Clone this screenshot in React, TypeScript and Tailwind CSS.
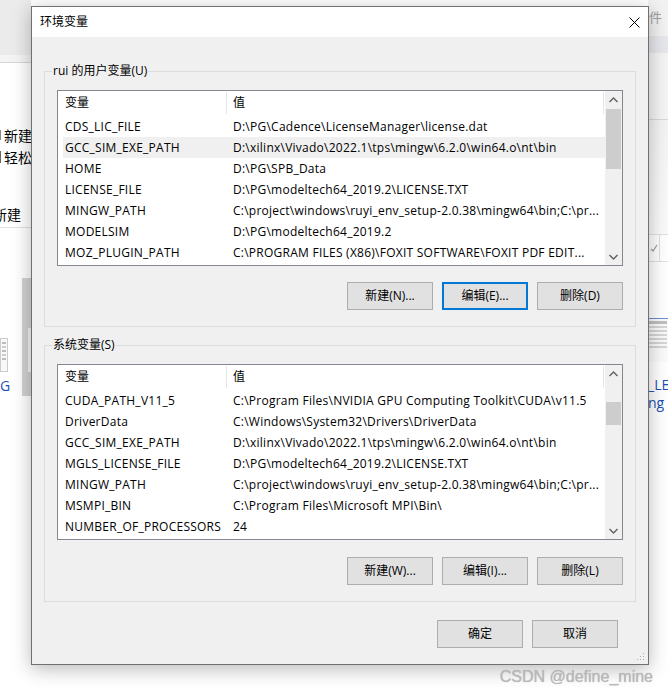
import type { ReactNode } from "react";

type Row = [string, string];

const userVars: Row[] = [
  ["CDS_LIC_FILE", "D:\\PG\\Cadence\\LicenseManager\\license.dat"],
  ["GCC_SIM_EXE_PATH", "D:\\xilinx\\Vivado\\2022.1\\tps\\mingw\\6.2.0\\win64.o\\nt\\bin"],
  ["HOME", "D:\\PG\\SPB_Data"],
  ["LICENSE_FILE", "D:\\PG\\modeltech64_2019.2\\LICENSE.TXT"],
  ["MINGW_PATH", "C:\\project\\windows\\ruyi_env_setup-2.0.38\\mingw64\\bin;C:\\pr..."],
  ["MODELSIM", "D:\\PG\\modeltech64_2019.2"],
  ["MOZ_PLUGIN_PATH", "C:\\PROGRAM FILES (X86)\\FOXIT SOFTWARE\\FOXIT PDF EDIT..."],
];

const systemVars: Row[] = [
  ["CUDA_PATH_V11_5", "C:\\Program Files\\NVIDIA GPU Computing Toolkit\\CUDA\\v11.5"],
  ["DriverData", "C:\\Windows\\System32\\Drivers\\DriverData"],
  ["GCC_SIM_EXE_PATH", "D:\\xilinx\\Vivado\\2022.1\\tps\\mingw\\6.2.0\\win64.o\\nt\\bin"],
  ["MGLS_LICENSE_FILE", "D:\\PG\\modeltech64_2019.2\\LICENSE.TXT"],
  ["MINGW_PATH", "C:\\project\\windows\\ruyi_env_setup-2.0.38\\mingw64\\bin;C:\\pr..."],
  ["MSMPI_BIN", "C:\\Program Files\\Microsoft MPI\\Bin\\"],
  ["NUMBER_OF_PROCESSORS", "24"],
];

function Chevron({ up }: { up?: boolean }) {
  return (
    <svg width="9" height="6" viewBox="0 0 9 6" className="text-[#606060]">
      <path
        d={up ? "M0.5 5 L4.5 1 L8.5 5" : "M0.5 1 L4.5 5 L8.5 1"}
        fill="none"
        stroke="currentColor"
        strokeWidth="1.4"
      />
    </svg>
  );
}

function VarList({
  rows,
  hovered,
  thumb,
}: {
  rows: Row[];
  hovered?: number;
  thumb: string;
}) {
  return (
    <div className="flex h-[176px] border border-[#828790] bg-white">
      <div className="flex min-w-0 flex-1 flex-col">
        <div className="flex h-[25px] shrink-0 pb-[2px]">
          <div className="mt-[1px] flex w-[169px] items-center border-r border-[#e5e5e5] pl-[7px]">
            变量
          </div>
          <div className="mr-[1px] mt-[1px] flex flex-1 items-center border-r border-[#e5e5e5] pl-[6px]">
            值
          </div>
        </div>
        {rows.map(([name, value], i) => (
          <div
            key={name}
            className={`ml-[5px] flex h-[21px] shrink-0 items-center tracking-[0.25px] ${
              i === hovered ? "bg-[#f0f0f0]" : ""
            }`}
          >
            <div className="w-[163px] shrink-0 overflow-hidden whitespace-nowrap pl-[2px]">{name}</div>
            <div className="min-w-0 flex-1 overflow-hidden whitespace-nowrap pl-[7px]">{value}</div>
          </div>
        ))}
      </div>
      <div className="flex w-[17px] shrink-0 flex-col bg-[#f0f0f0]">
        <div className="flex h-[17px] items-center justify-center">
          <Chevron up />
        </div>
        <div className="flex-1 px-[1px]">
          <div className={`bg-[#cdcdcd] ${thumb}`} />
        </div>
        <div className="flex h-[17px] items-center justify-center">
          <Chevron />
        </div>
      </div>
    </div>
  );
}

function Button({ children, focused }: { children: ReactNode; focused?: boolean }) {
  return (
    <div
      className={`flex h-[28px] w-[86px] items-center justify-center bg-[#e1e1e1] ${
        focused ? "border-2 border-[#0078d7]" : "border border-[#adadad]"
      }`}
    >
      {children}
    </div>
  );
}

function GroupBox({ label, children }: { label: string; children: ReactNode }) {
  return (
    <div className="relative mx-[12px] w-[592px] border border-[#dcdcdc] px-[12px] pb-[16px] pt-[18px]">
      <span className="absolute left-[7px] top-[-9px] bg-[#f0f0f0] px-[1px] leading-[16px]">
        {label}
      </span>
      {children}
    </div>
  );
}

function BackgroundLeft() {
  return (
    <div className="absolute left-0 top-0 flex h-full w-[31px] flex-col overflow-hidden bg-white text-[14px] text-black">
      <div className="h-[55px] shrink-0 bg-[#ebebeb]" />
      <div className="h-[8px] shrink-0 border-b border-[#d6d6d6] bg-[#f4f4f4]" />
      <div className="mt-[61px] flex h-[22px] shrink-0 items-center whitespace-nowrap">
        <span className="h-[10px] w-[4px] border border-l-0 border-[#888]" />
        <span className="ml-[3px]">新建</span>
      </div>
      <div className="flex h-[22px] shrink-0 items-center whitespace-nowrap">
        <span className="h-[12px] w-[4px] border border-l-0 border-[#666]" />
        <span className="ml-[3px]">轻松</span>
      </div>
      <div className="mt-[35px] flex h-[22px] shrink-0 items-center whitespace-nowrap">
        <span className="-ml-[7px]">新建</span>
      </div>
      <div className="mt-[2px] h-[1px] shrink-0 bg-[#e0e0e0]" />
      <div className="mt-[50px] flex shrink-0">
        <div className="mt-[60px] flex w-[22px] flex-col">
          <div className="flex h-[34px] w-[8px] flex-col gap-[2px] border border-[#ccc] bg-[#f8f8f8] px-[1px] py-[3px]">
            <div className="h-[2px] bg-[#bbb]" />
            <div className="h-[2px] bg-[#ccc]" />
            <div className="h-[2px] bg-[#bbb]" />
            <div className="h-[2px] bg-[#ccc]" />
            <div className="h-[2px] bg-[#bbb]" />
          </div>
          <span className="mt-[6px] leading-[16px] text-[#1a4fb5]">G</span>
        </div>
        <div className="flex h-[118px] w-[9px] flex-col bg-[#d2d2d2] pl-[6px]">
          <div className="mt-[50px] h-[44px] bg-[#f4f4f4]" />
        </div>
      </div>
    </div>
  );
}

function BackgroundRight() {
  return (
    <div className="absolute right-0 top-0 flex h-full w-[20px] flex-col overflow-hidden bg-white text-[14px]">
      <div className="flex h-[36px] shrink-0 items-center bg-[#f2f2f2] text-[13px] text-[#a0a0a0]">
        <span className="ml-[1px]">件</span>
      </div>
      <div className="h-[17px] shrink-0 bg-[#e6e7eb]" />
      <div className="h-[67px] shrink-0 border-b border-[#d8d8d8] bg-[#f4f4f4]" />
      <div className="h-[114px] shrink-0 bg-gradient-to-b from-[#f3f3f3] to-[#fafafa]" />
      <div className="flex h-[28px] shrink-0 border-y border-[#e0e0e0]">
        <div className="flex w-[12px] items-center justify-center border-r border-[#e0e0e0]">
          <svg width="8" height="8" viewBox="0 0 8 8">
            <path d="M1 5 L3 7 L7 1" fill="none" stroke="#a0a0a0" strokeWidth="1.3" />
          </svg>
        </div>
      </div>
      <div className="mt-[56px] flex h-[44px] shrink-0 flex-col gap-[2px] border-t border-[#6b8fd6] bg-[#fafafa] px-[1px] pt-[2px]">
        <div className="h-[3px] bg-[#bfbfbf]" />
        <div className="h-[2px] bg-[#d5d5d5]" />
        <div className="h-[2px] bg-[#d5d5d5]" />
        <div className="h-[2px] bg-[#d5d5d5]" />
        <div className="h-[2px] bg-[#d5d5d5]" />
        <div className="h-[2px] bg-[#d5d5d5]" />
        <div className="h-[2px] bg-[#d5d5d5]" />
      </div>
      <div className="mt-[14px] whitespace-nowrap leading-[18px] text-[#1a4fb5]">_LE</div>
      <div className="whitespace-nowrap leading-[18px] text-[#1a4fb5]">ng</div>
    </div>
  );
}

export default function App() {
  return (
    <div className="relative h-[695px] w-[668px] overflow-hidden bg-white font-['Open_Sans','Noto_Sans_CJK_SC',sans-serif] text-[12px] text-black">
      <BackgroundLeft />
      <BackgroundRight />

      <div className="absolute left-[31px] top-[6px] flex h-[659px] w-[618px] flex-col border border-[#707070] bg-[#f0f0f0] shadow-[0_4px_18px_rgba(0,0,0,0.28)]">
        <div className="flex h-[30px] shrink-0 items-center justify-between bg-white pl-[8px]">
          <span>环境变量</span>
          <div className="flex h-full w-[28px] items-center justify-center">
            <svg width="11" height="11" viewBox="0 0 11 11">
              <path d="M0.5 0.5 L10.5 10.5 M10.5 0.5 L0.5 10.5" stroke="#000" strokeWidth="1" />
            </svg>
          </div>
        </div>

        <div className="mt-[34px]">
          <GroupBox label="rui 的用户变量(U)">
            <VarList rows={userVars} hovered={1} thumb="mt-[1px] h-[60px]" />
            <div className="mt-[16px] flex justify-end gap-[9px]">
              <Button>新建(N)...</Button>
              <Button focused>编辑(E)...</Button>
              <Button>删除(D)</Button>
            </div>
          </GroupBox>
        </div>

        <div className="mt-[18px]">
          <GroupBox label="系统变量(S)">
            <VarList rows={systemVars} thumb="mt-[20px] h-[23px]" />
            <div className="mt-[17px] flex justify-end gap-[9px]">
              <Button>新建(W)...</Button>
              <Button>编辑(I)...</Button>
              <Button>删除(L)</Button>
            </div>
          </GroupBox>
        </div>

        <div className="mr-[30px] mt-[18px] flex justify-end gap-[9px]">
          <Button>确定</Button>
          <Button>取消</Button>
        </div>

        <svg
          width="8"
          height="8"
          viewBox="0 0 8 8"
          className="absolute bottom-[3px] right-[3px]"
        >
          <rect x="6" y="0" width="1" height="1" fill="#b0b0b0" />
          <rect x="3" y="3" width="1" height="1" fill="#b0b0b0" />
          <rect x="6" y="3" width="1" height="1" fill="#b0b0b0" />
          <rect x="0" y="6" width="1" height="1" fill="#b0b0b0" />
          <rect x="3" y="6" width="1" height="1" fill="#b0b0b0" />
          <rect x="6" y="6" width="1" height="1" fill="#b0b0b0" />
        </svg>
      </div>

      <div className="absolute right-[15px] top-[668px] font-['Liberation_Sans',Arial,sans-serif] text-[16px] leading-[18px] text-[#b8b8b8] [text-shadow:0_0_1px_rgba(0,0,0,0.25)]">
        CSDN @define_mine
      </div>
    </div>
  );
}
